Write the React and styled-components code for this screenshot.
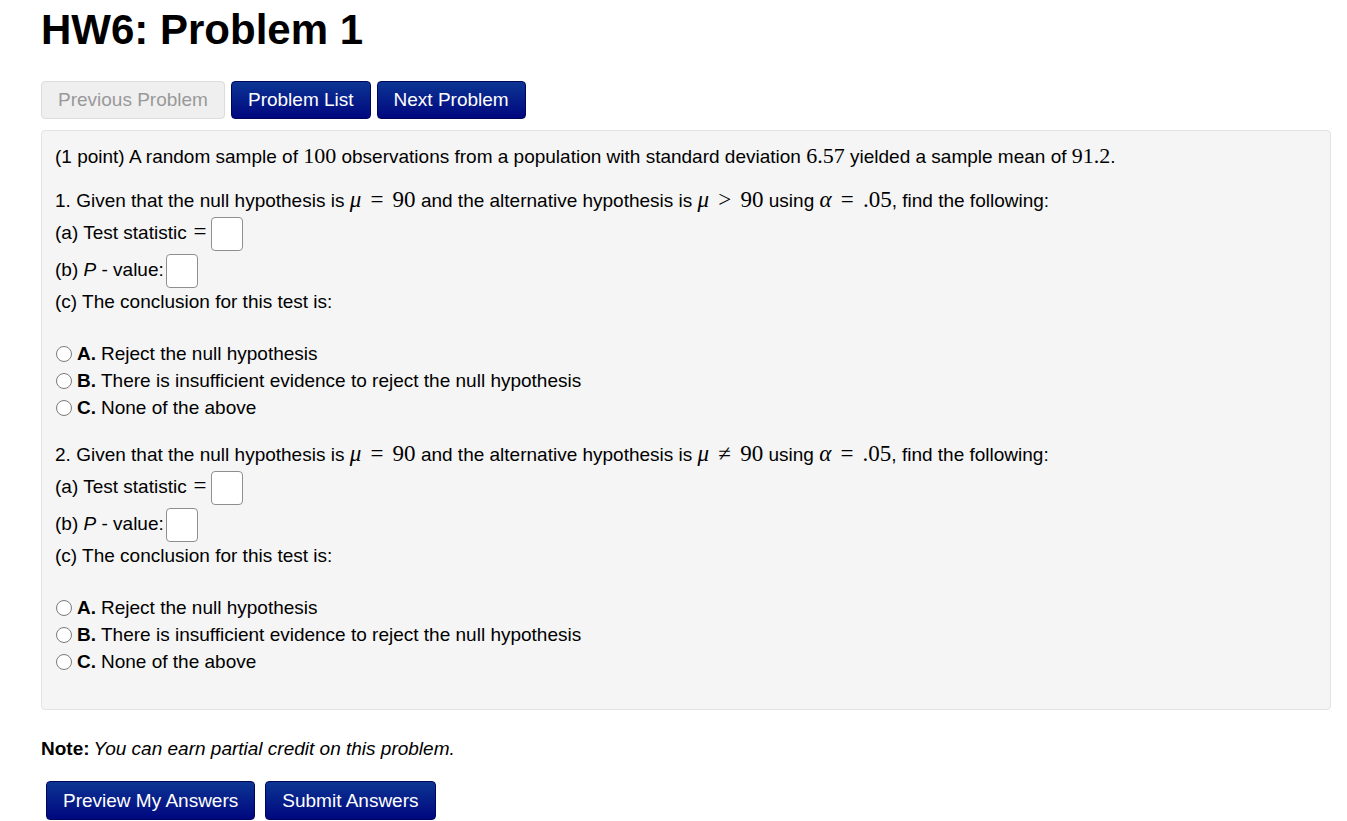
import styled, { createGlobalStyle } from "styled-components";

const GlobalStyle = createGlobalStyle`
  body {
    margin: 0;
    background: #ffffff;
    color: #000000;
    font-family: "Liberation Sans", Arial, sans-serif;
  }
`;

const Page = styled.div`
  padding: 0 16px 0 41px;
`;

const Title = styled.h1`
  margin: 0;
  padding-top: 6px;
  font-size: 42px;
  line-height: 48px;
  font-weight: bold;
`;

const NavRow = styled.div`
  display: flex;
  gap: 6px;
  margin-top: 27px;
`;

const Button = styled.button`
  height: ${(p) => p.$h || 38}px;
  padding: 0 16px;
  font-family: "Liberation Sans", Arial, sans-serif;
  font-size: 19px;
  border-radius: 4px;
  cursor: pointer;
  color: #ffffff;
  background: linear-gradient(to bottom, #0c3593, #00077f);
  border: 1px solid #00055c;
  &:disabled {
    color: #999999;
    background: #efefef;
    border: 1px solid #dcdcdc;
    cursor: default;
  }
`;

const ProblemBox = styled.div`
  margin-top: 11px;
  padding: 12px 13px 34px;
  background: #f5f5f5;
  border: 1px solid #e3e3e3;
  border-radius: 4px;
  font-size: 19px;
`;

const Line = styled.div`
  height: ${(p) => p.$h || 27}px;
  line-height: ${(p) => p.$h || 27}px;
  margin-top: ${(p) => p.$mt || 0}px;
  white-space: nowrap;
`;

const AnswerBox = styled.input`
  width: 32px;
  height: 34px;
  box-sizing: border-box;
  margin: 0 0 0 2px;
  padding: 0;
  vertical-align: middle;
  border: 1px solid #8f8f8f;
  border-radius: 4px;
  background: #ffffff;
`;

const Choice = styled.label`
  display: flex;
  align-items: center;
  height: 27px;
`;

const Radio = styled.span`
  width: 14px;
  height: 14px;
  margin: 1px 5px 0 1px;
  border: 1px solid #7a7a7a;
  border-radius: 50%;
  background: #ffffff;
  flex-shrink: 0;
`;

const Letter = styled.b`
  margin-right: 5px;
`;

const Math = styled.span`
  font-family: "Liberation Serif", "Times New Roman", serif;
  font-size: ${(p) => p.$size || 23}px;
  line-height: 1;
`;

const Mi = styled.i`
  font-family: "Liberation Serif", "Times New Roman", serif;
`;

const Mo = styled.span`
  margin: ${(p) => (p.$tight ? "0 0.12em 0 0.3em" : "0 0.4em")};
`;

const Note = styled.p`
  margin: 25px 0 0;
  font-size: 19px;
  line-height: 27px;
  em {
    margin-left: 4px;
  }
`;

const SubmitRow = styled.div`
  display: flex;
  gap: 10px;
  margin: 19px 0 0 5px;
`;

const choices = [
  "Reject the null hypothesis",
  "There is insufficient evidence to reject the null hypothesis",
  "None of the above",
];

const Part = ({ num, rel, first }) => (
  <>
    <Line $mt={first ? 17 : 20}>
      {num}. Given that the null hypothesis is{" "}
      <Math>
        <Mi>μ</Mi>
        <Mo>=</Mo>90
      </Math>{" "}
      and the alternative hypothesis is{" "}
      <Math>
        <Mi>μ</Mi>
        <Mo>{rel}</Mo>90
      </Math>{" "}
      using{" "}
      <Math>
        <Mi>α</Mi>
        <Mo>=</Mo>.05
      </Math>
      , find the following:
    </Line>
    <Line $h={37}>
      (a) Test statistic
      <Math>
        <Mo $tight>=</Mo>
      </Math>
      <AnswerBox type="text" />
    </Line>
    <Line $h={37}>
      (b) <i>P</i> - value:
      <AnswerBox type="text" />
    </Line>
    <Line>(c) The conclusion for this test is:</Line>
    <div style={{ marginTop: 25 }}>
      {choices.map((c, i) => (
        <Choice key={c}>
          <Radio />
          <Letter>{"ABC"[i]}.</Letter>
          {c}
        </Choice>
      ))}
    </div>
  </>
);

export default function App() {
  return (
    <Page>
      <GlobalStyle />
      <Title>HW6: Problem 1</Title>
      <NavRow>
        <Button disabled>Previous Problem</Button>
        <Button>Problem List</Button>
        <Button>Next Problem</Button>
      </NavRow>
      <ProblemBox>
        <Line>
          (1 point) A random sample of <Math $size={22}>100</Math> observations
          from a population with standard deviation{" "}
          <Math $size={22}>6.57</Math> yielded a sample mean of{" "}
          <Math $size={22}>91.2</Math>.
        </Line>
        <Part num={1} rel=">" first />
        <Part num={2} rel="≠" />
      </ProblemBox>
      <Note>
        <b>Note:</b>
        <em>You can earn partial credit on this problem.</em>
      </Note>
      <SubmitRow>
        <Button $h={39}>Preview My Answers</Button>
        <Button $h={39}>Submit Answers</Button>
      </SubmitRow>
    </Page>
  );
}
